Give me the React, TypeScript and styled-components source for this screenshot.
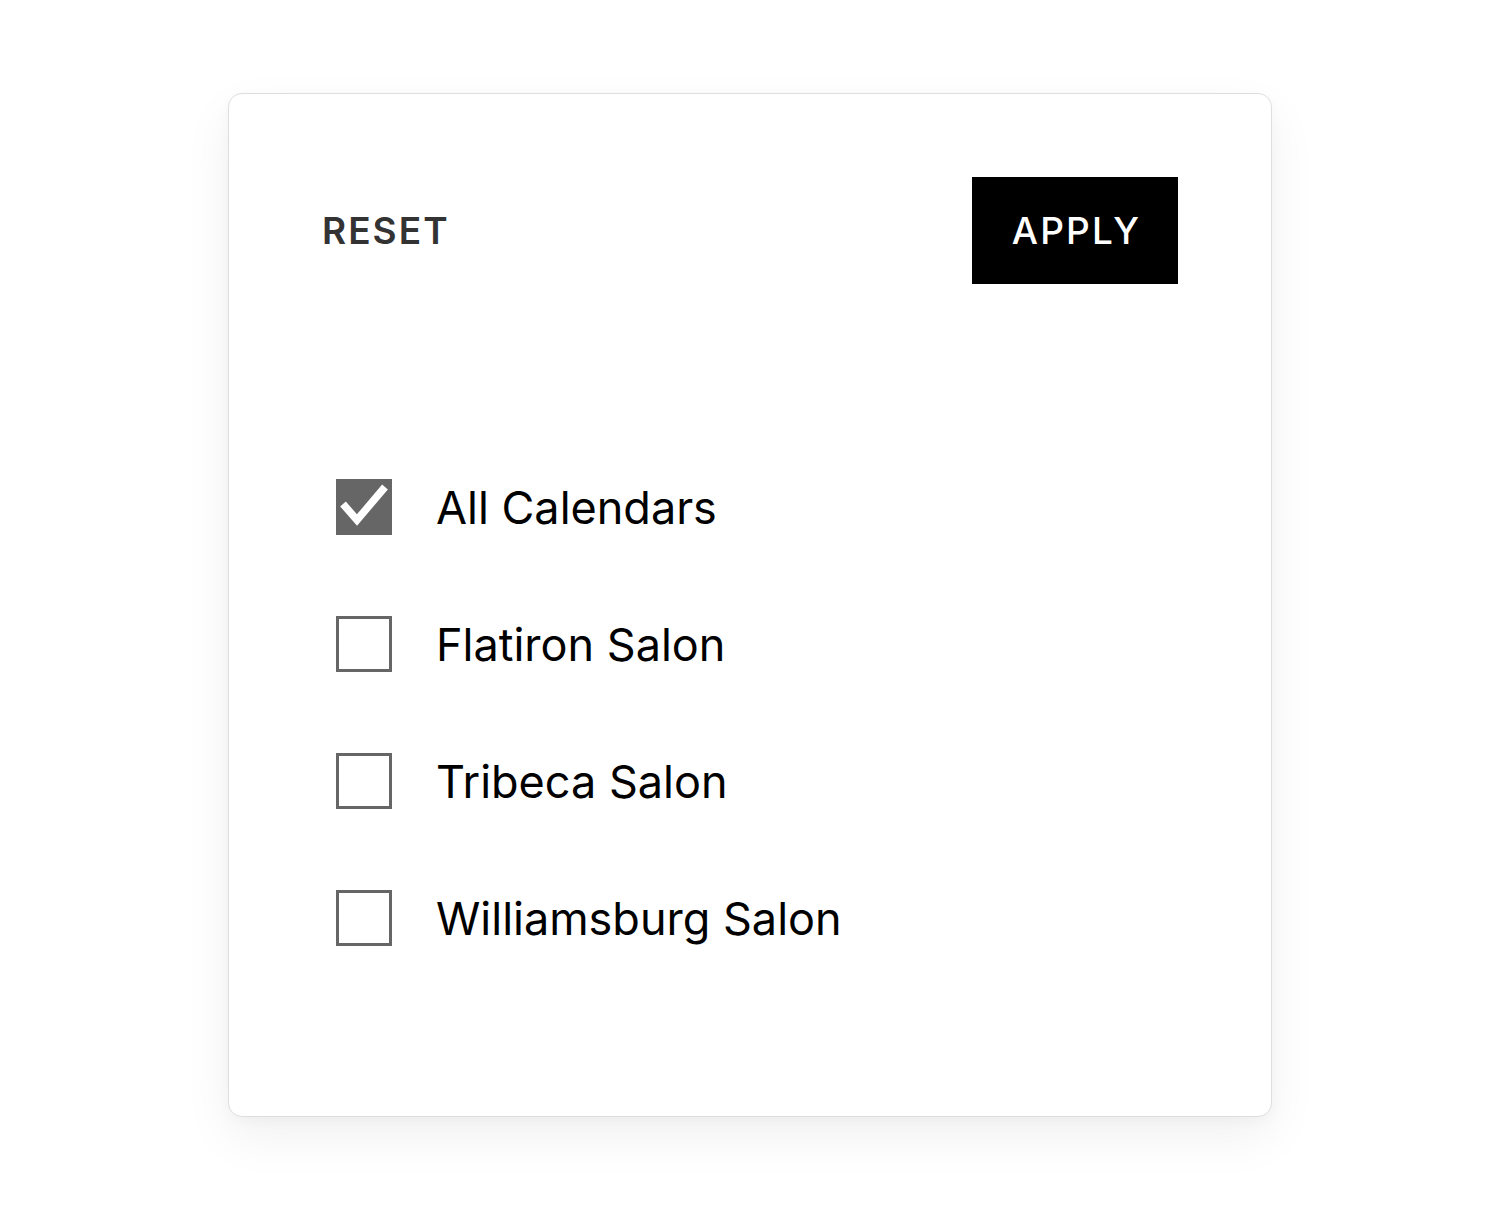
import * as React from 'react';
import styled, { createGlobalStyle } from 'styled-components';

const GlobalStyle = createGlobalStyle`
  html, body {
    margin: 0;
    padding: 0;
    background: #ffffff;
  }
  body {
    font-family: Inter, "Liberation Sans", Arial, sans-serif;
  }
`;

const Page = styled.div`
  display: flex;
  justify-content: center;
  padding-top: 93px;
  height: 1211px;
  box-sizing: border-box;
`;

const Card = styled.div`
  width: 1044px;
  height: 1024px;
  box-sizing: border-box;
  background: #fff;
  border: 1px solid #dedede;
  border-radius: 14px;
  box-shadow: 0 20px 50px rgba(0, 0, 0, 0.06), 0 4px 14px rgba(0, 0, 0, 0.03);
  padding: 83px 93px 0 93px;
  display: flex;
  flex-direction: column;
`;

const Toolbar = styled.div`
  display: flex;
  align-items: center;
  justify-content: space-between;
`;

const TextButton = styled.button`
  border: none;
  background: none;
  padding: 0;
  font-family: Inter, "Liberation Sans", Arial, sans-serif;
  font-size: 37px;
  font-weight: 600;
  letter-spacing: 0.055em;
  color: #333;
  cursor: pointer;
`;

const SolidButton = styled.button`
  width: 206px;
  height: 107px;
  border: none;
  background: #000;
  color: #fff;
  font-family: Inter, "Liberation Sans", Arial, sans-serif;
  font-size: 37px;
  font-weight: 500;
  letter-spacing: 0.06em;
  padding: 0 0 0 3px;
  cursor: pointer;
`;

const List = styled.ul`
  list-style: none;
  margin: 195px 0 0 0;
  padding: 0 0 0 14px;
  display: flex;
  flex-direction: column;
  gap: 81px;
`;

const Row = styled.li`
  display: flex;
  align-items: center;
  gap: 44px;
  height: 56px;
`;

const Box = styled.span<{ checked?: boolean }>`
  width: 56px;
  height: 56px;
  box-sizing: border-box;
  flex-shrink: 0;
  border: 3px solid #666;
  background: ${(p) => (p.checked ? '#666' : '#fff')};
  display: flex;
  align-items: center;
  justify-content: center;
`;

const Label = styled.span`
  font-family: Inter, "Liberation Sans", Arial, sans-serif;
  font-size: 45px;
  font-weight: 400;
  color: #000;
  line-height: 1;
`;

const CheckMark = () => (
  <svg width="56" height="56" viewBox="0 0 56 56" style={{ margin: -3 }}>
    <polyline
      points="7,25 21,41 49,8"
      fill="none"
      stroke="#fff"
      strokeWidth="7.5"
      strokeLinejoin="miter"
      strokeLinecap="butt"
    />
  </svg>
);

const calendars = [
  { name: 'All Calendars', checked: true },
  { name: 'Flatiron Salon', checked: false },
  { name: 'Tribeca Salon', checked: false },
  { name: 'Williamsburg Salon', checked: false },
];

export default function App() {
  return (
    <>
      <GlobalStyle />
      <Page>
        <Card>
          <Toolbar>
            <TextButton>RESET</TextButton>
            <SolidButton>APPLY</SolidButton>
          </Toolbar>
          <List>
            {calendars.map((c) => (
              <Row key={c.name}>
                <Box checked={c.checked}>{c.checked ? <CheckMark /> : null}</Box>
                <Label>{c.name}</Label>
              </Row>
            ))}
          </List>
        </Card>
      </Page>
    </>
  );
}
